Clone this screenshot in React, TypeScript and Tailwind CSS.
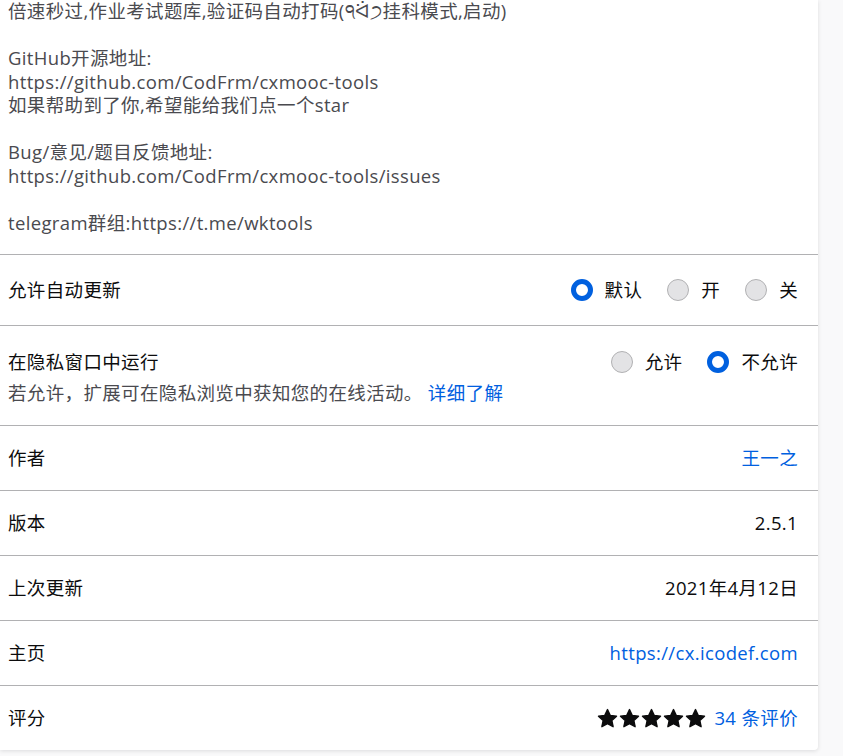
import type { ReactNode } from 'react';

const description = `倍速秒过,作业考试题库,验证码自动打码(੧ᐛ੭挂科模式,启动)

GitHub开源地址:
https://github.com/CodFrm/cxmooc-tools
如果帮助到了你,希望能给我们点一个star

Bug/意见/题目反馈地址:
https://github.com/CodFrm/cxmooc-tools/issues

telegram群组:https://t.me/wktools`;

function Radio({ label, checked }: { label: string; checked?: boolean }) {
  return (
    <label className="flex items-center gap-[12px]">
      {checked ? (
        <span className="h-[22px] w-[22px] rounded-full border-[5px] border-[#0060df] bg-white" />
      ) : (
        <span className="h-[22px] w-[22px] rounded-full border border-[#b1b1b3] bg-[#e3e3e5]" />
      )}
      <span className="text-[#0c0c0d]">{label}</span>
    </label>
  );
}

function Star() {
  return (
    <svg viewBox="0 0 24 24" className="h-[21px] w-[21px]" fill="#0c0c0d">
      <path d="M12 1.8l3.1 6.6 7.2.9-5.3 5 1.4 7.1L12 17.9l-6.4 3.5 1.4-7.1-5.3-5 7.2-.9z" strokeLinejoin="round" stroke="#0c0c0d" strokeWidth="1.6" />
    </svg>
  );
}

function InfoRow({ label, children }: { label: string; children: ReactNode }) {
  return (
    <div className="flex h-[65px] items-center justify-between border-t border-[#b1b1b3] pl-2 pr-5">
      <span className="text-[#0c0c0d]">{label}</span>
      {children}
    </div>
  );
}

export default function App() {
  return (
    <div
      className="min-h-[756px] bg-[#f9f9fa] text-[18.5px] leading-[23.5px] tracking-[0.35px]"
      style={{ fontFamily: '"Open Sans", "Noto Sans CJK SC", sans-serif' }}
    >
      <div className="w-[818px] overflow-hidden rounded-br-[4px] bg-white shadow-[0_1px_4px_rgba(12,12,13,0.12)]">
        <div className="-mt-[1px] whitespace-pre-wrap pb-5 pl-2 pr-5 text-[#4a4a4f]">{description}</div>

        <div className="flex h-[71px] items-center justify-between border-t border-[#b1b1b3] pl-2 pr-5">
          <span className="text-[#0c0c0d]">允许自动更新</span>
          <div className="flex items-center gap-[25px]">
            <Radio label="默认" checked />
            <Radio label="开" />
            <Radio label="关" />
          </div>
        </div>

        <div className="flex h-[100px] flex-col border-t border-[#b1b1b3] pl-2 pr-5 pt-[24px]">
          <div className="flex items-center justify-between">
            <span className="text-[#0c0c0d]">在隐私窗口中运行</span>
            <div className="flex items-center gap-[25px]">
              <Radio label="允许" />
              <Radio label="不允许" checked />
            </div>
          </div>
          <div className="mt-[7px] text-[#4a4a4f]">
            若允许，扩展可在隐私浏览中获知您的在线活动。 <span className="text-[#0060df]">详细了解</span>
          </div>
        </div>

        <InfoRow label="作者">
          <span className="text-[#0060df]">王一之</span>
        </InfoRow>
        <InfoRow label="版本">
          <span className="text-[#0c0c0d]">2.5.1</span>
        </InfoRow>
        <InfoRow label="上次更新">
          <span className="text-[#0c0c0d]">2021年4月12日</span>
        </InfoRow>
        <InfoRow label="主页">
          <span className="text-[#0060df]">https://cx.icodef.com</span>
        </InfoRow>
        <InfoRow label="评分">
          <div className="flex items-center gap-[8px]">
            <div className="flex items-center gap-[1px]">
              <Star />
              <Star />
              <Star />
              <Star />
              <Star />
            </div>
            <span className="text-[#0060df]">34 条评价</span>
          </div>
        </InfoRow>
      </div>
    </div>
  );
}
